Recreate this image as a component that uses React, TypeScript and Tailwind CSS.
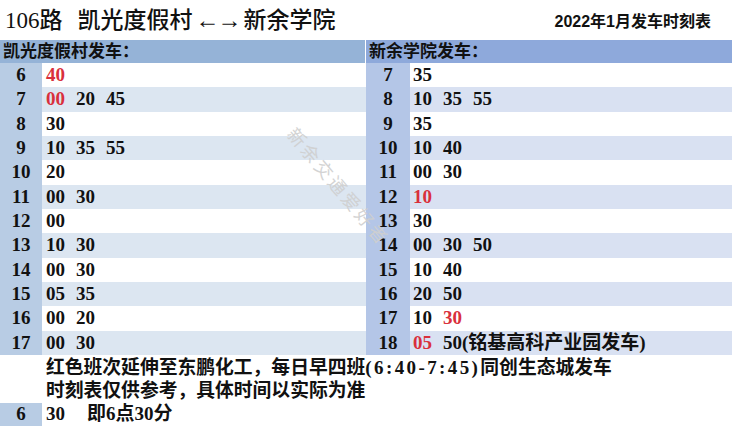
const serif = "font-['Liberation_Serif','Noto_Sans_CJK_SC',serif]";

type Min = { v: string; red?: boolean };
type Row = { h: number; mins: Min[] };

const m = (s: string): Min[] =>
  s.split(" ").map((t) => (t.startsWith("*") ? { v: t.slice(1), red: true } : { v: t }));

const leftRows: Row[] = [
  { h: 6, mins: m("*40") },
  { h: 7, mins: m("*00 20 45") },
  { h: 8, mins: m("30") },
  { h: 9, mins: m("10 35 55") },
  { h: 10, mins: m("20") },
  { h: 11, mins: m("00 30") },
  { h: 12, mins: m("00") },
  { h: 13, mins: m("10 30") },
  { h: 14, mins: m("00 30") },
  { h: 15, mins: m("05 35") },
  { h: 16, mins: m("00 20") },
  { h: 17, mins: m("00 30") },
];

const rightRows: Row[] = [
  { h: 7, mins: m("35") },
  { h: 8, mins: m("10 35 55") },
  { h: 9, mins: m("35") },
  { h: 10, mins: m("10 40") },
  { h: 11, mins: m("00 30") },
  { h: 12, mins: m("*10") },
  { h: 13, mins: m("30") },
  { h: 14, mins: m("00 30 50") },
  { h: 15, mins: m("10 40") },
  { h: 16, mins: m("20 50") },
  { h: 17, mins: m("10 *30") },
  { h: 18, mins: m("*05 50(铭基高科产业园发车)") },
];

function Half({
  title,
  rows,
  bar,
  hourBg,
  light,
  hourW,
  pad,
}: {
  title: string;
  rows: Row[];
  bar: string;
  hourBg: string;
  light: string;
  hourW: string;
  pad: string;
}) {
  return (
    <div className="flex flex-col">
      <div className={`h-[23px] flex items-center pl-[3px] text-[17px] font-bold text-[#111] ${bar}`}>
        {title}
      </div>
      {rows.map((r, i) => (
        <div key={r.h} className="flex h-[24.33px]">
          <div className={`${hourW} ${hourBg} flex items-center justify-center text-[19px] font-bold`}>
            {r.h}
          </div>
          <div className={`flex-1 flex items-center gap-[11px] ${pad} text-[19px] font-bold ${i % 2 ? light : "bg-white"}`}>
            {r.mins.map((x, j) => (
              <span key={j} className={x.red ? "text-[#d9303c]" : "text-[#111]"}>
                {x.v}
              </span>
            ))}
          </div>
        </div>
      ))}
    </div>
  );
}

export default function App() {
  return (
    <div className={`relative w-[732px] h-[426px] overflow-hidden bg-white text-[#111] ${serif}`}>
      <div className="h-[40px] flex items-center justify-between pl-[5px] pr-[21px]">
        <div className="text-[23px] leading-none flex items-center font-medium">
          <span>106路</span>
          <span className="ml-[15px]">凯光度假村</span>
          <span className="ml-[3px] text-[24px] tracking-[-2px]">←→</span>
          <span className="ml-[4px]">新余学院</span>
        </div>
        <div className="font-['Liberation_Sans','Noto_Sans_CJK_SC',sans-serif] text-[16px] font-bold pt-[4px]">
          2022年1月发车时刻表
        </div>
      </div>

      <div className="grid grid-cols-[366px_1fr]">
        <Half
          title="凯光度假村发车："
          rows={leftRows}
          bar="bg-[#95b3d7] mr-[1px]"
          hourBg="bg-[#b8cce4]"
          light="bg-[#dce6f1]"
          hourW="w-[42px]"
          pad="pl-[4px]"
        />
        <Half
          title="新余学院发车："
          rows={rightRows}
          bar="bg-[#8ea9db]"
          hourBg="bg-[#b4c6e7]"
          light="bg-[#d9e1f2]"
          hourW="w-[44px]"
          pad="pl-[3px]"
        />
      </div>

      <div className="pl-[46px] text-[18.8px] font-bold leading-[23px] pt-[1px]">
        <div>
          红色班次延伸至东鹏化工，每日早四班
          <span className="text-[19px] tracking-[2.4px]">(6:40-7:45)</span>
          同创生态城发车
        </div>
        <div>时刻表仅供参考，具体时间以实际为准</div>
      </div>

      <div className="flex h-[24px] border-b border-[#dadada] mt-[1px]">
        <div className="w-[42px] bg-[#b8cce4] flex items-center justify-center text-[19px] font-bold">6</div>
        <div className="flex-1 flex items-center pl-[4px] text-[19px] font-bold">
          <span>30</span>
          <span className="ml-[22px]">即6点30分</span>
        </div>
      </div>
      <div className="flex h-[2px]">
        <div className="w-[42px]" />
        {[0, 1, 2, 3, 4, 5, 6, 7].map((k) => (
          <div key={k} className="w-[82px] border-l border-[#dadada]" />
        ))}
      </div>

      <div className="absolute left-[264px] top-[174px] rotate-[50deg] text-[18px] font-normal tracking-[3px] text-[#cfcfcf] opacity-90 pointer-events-none whitespace-nowrap">
        新余交通爱好者
      </div>
    </div>
  );
}
